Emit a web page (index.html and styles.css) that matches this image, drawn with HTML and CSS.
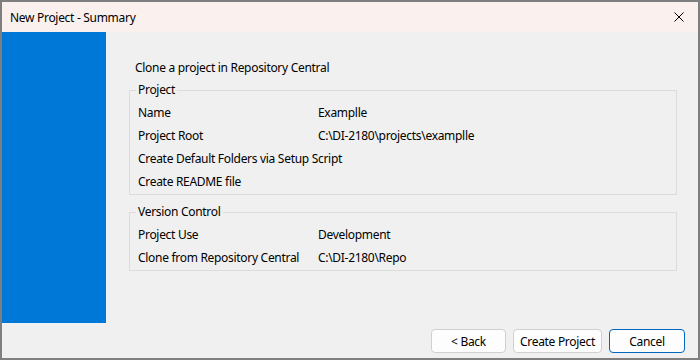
FILE: index.html
```html
<!DOCTYPE html>
<html lang="en">
<head>
  <meta charset="UTF-8" />
  <title>New Project - Summary</title>
  <link rel="stylesheet" href="styles.css">
</head>
<body>
  <div class="dialog">
    <div class="title-bar">
      <span class="title">New Project - Summary</span>
      <button class="close" title="Close">
        <svg width="10" height="10" viewBox="0 0 10 10"><path d="M0.5 0.5L9.5 9.5M9.5 0.5L0.5 9.5" stroke="#000" stroke-width="1" fill="none"/></svg>
      </button>
    </div>

    <div class="main">
      <div class="side"></div>
      <div class="content">
        <p class="intro">Clone a project in Repository Central</p>

        <fieldset class="group">
          <legend>Project</legend>
          <div class="row"><span class="label">Name</span><span>Examplle</span></div>
          <div class="row"><span class="label">Project Root</span><span>C:\DI-2180\projects\examplle</span></div>
          <div class="row"><span class="label">Create Default Folders via Setup Script</span></div>
          <div class="row"><span class="label">Create README file</span></div>
        </fieldset>

        <fieldset class="group">
          <legend>Version Control</legend>
          <div class="row"><span class="label">Project Use</span><span>Development</span></div>
          <div class="row"><span class="label">Clone from Repository Central</span><span>C:\DI-2180\Repo</span></div>
        </fieldset>
      </div>
    </div>

    <div class="footer">
      <button class="btn back">&lt; Back</button>
      <button class="btn create">Create Project</button>
      <button class="btn cancel">Cancel</button>
    </div>
  </div>
</body>
</html>
```

FILE: styles.css
```css
body {
  margin: 0;
  background: #7f7f7f;
  font-family: "Noto Sans", sans-serif;
  font-size: 12px;
  letter-spacing: -0.3px;
  color: #000;
}
.dialog {
  margin: 2px;
  width: 696px;
  height: 356px;
  background: #f0f0f0;
  display: flex;
  flex-direction: column;
}
.title-bar {
  height: 30px;
  flex-shrink: 0;
  background: #faf0ee;
  display: flex;
  align-items: center;
  justify-content: space-between;
  padding: 0 8px 0 8px;
}
.title {
  padding-top: 1px;
}
button.close {
  background: none;
  border: none;
  padding: 0;
  width: 20px;
  height: 20px;
  display: flex;
  align-items: center;
  justify-content: center;
  margin-right: 1px;
}
.main {
  display: flex;
  height: 291px;
  flex-shrink: 0;
}
.side {
  width: 104px;
  background: #0078d7;
}
.content {
  flex: 1;
  padding: 28px 21px 0 23px;
}
.intro {
  margin: 0 0 6px 6px;
  line-height: 16px;
}
.group {
  margin: 0 0 9px 0;
  padding: 3px 6px 1px 6px;
  border: 1px solid #dcdcdc;
  min-width: 0;
}
.group legend {
  padding: 0 2px;
  line-height: 16px;
}
.row {
  display: flex;
  line-height: 23px;
  padding-left: 2px;
  white-space: nowrap;
}
.row .label {
  width: 180px;
  flex-shrink: 0;
}
.footer {
  flex: 1;
  display: flex;
  justify-content: flex-end;
  align-items: flex-start;
  gap: 7px;
  padding: 6px 13px 0 0;
}
.btn {
  font-family: inherit;
  font-size: 12px;
  letter-spacing: -0.3px;
  color: #000;
  height: 24px;
  background: #fdfdfd;
  border: 1px solid #d0d0d0;
  border-radius: 4px;
  padding: 0;
}
.btn.back {
  width: 75px;
}
.btn.create {
  width: 89px;
}
.btn.cancel {
  width: 76px;
  border-color: #0067c0;
}
```
